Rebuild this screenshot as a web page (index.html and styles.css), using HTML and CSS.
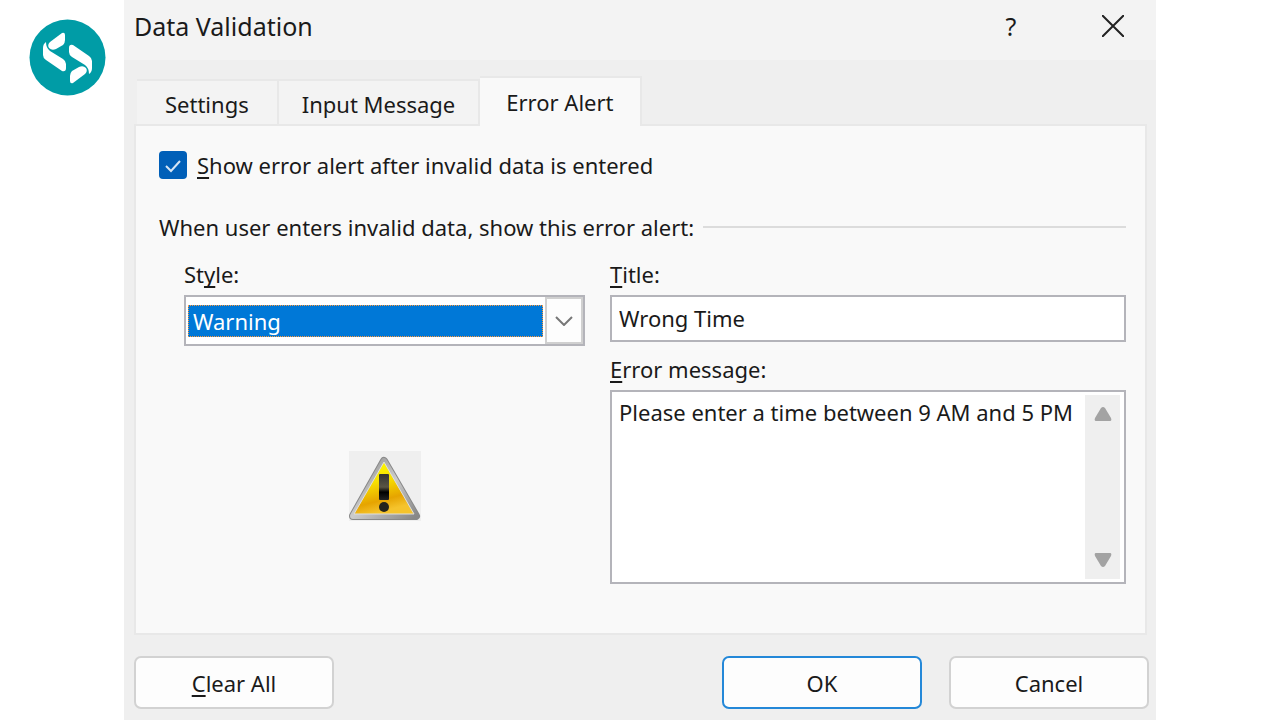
FILE: index.html
```html
<!DOCTYPE html>
<html lang="en">
<head>
    <meta charset="UTF-8">
    <meta name="viewport" content="width=device-width, initial-scale=1.0">
    <title>Data Validation</title>
    <link rel="stylesheet" href="styles.css">
</head>
<body>
    <div class="page">
        <header class="brand">
            <svg class="logo" viewBox="0 0 77 77" role="img" aria-label="Logo">
                <defs>
                    <g id="half">
                        <path d="M33 14 Q36 13 36 16 V21 Q36 24 34 26 L27 30 Q23 32 20 29 Q18 26 21 23 Z"/>
                        <path d="M17 23 Q14 25 14 29 V36 Q14 39 17 41 L33 52 Q37 53 37 49 V45 Q37 42 34 40 L21 32 Q17 29 17 23 Z"/>
                    </g>
                </defs>
                <circle cx="38.5" cy="38.5" r="38" fill="#009ca6"/>
                <use href="#half" fill="#fff"/>
                <use href="#half" fill="#fff" transform="rotate(180 38.5 39)"/>
            </svg>
        </header>

        <main class="dialog">
            <div class="title-bar">
                <h1>Data Validation</h1>
                <button class="title-button" type="button" aria-label="Help">?</button>
                <button class="title-button close-button" type="button" aria-label="Close">
                    <svg width="22" height="22" viewBox="0 0 22 22" fill="none" stroke="#222" stroke-width="2">
                        <path d="M0 0 L22 22 M22 0 L0 22"/>
                    </svg>
                </button>
            </div>

            <form class="dialog-body">
                <div class="tabs" role="tablist">
                    <button class="tab first" type="button" role="tab">Settings</button>
                    <button class="tab" type="button" role="tab">Input Message</button>
                    <button class="tab active" type="button" role="tab" aria-selected="true">Error Alert</button>
                </div>

                <section class="panel">
                    <div class="check-row">
                        <input type="checkbox" id="showAlert" checked>
                        <label for="showAlert"><u>S</u>how error alert after invalid data is entered</label>
                    </div>

                    <h2>When user enters invalid data, show this error alert:</h2>

                    <div class="columns">
                        <div class="column">
                            <label for="alertStyle">St<u>y</u>le:</label>
                            <div class="select-box">
                                <select id="alertStyle">
                                    <option>Stop</option>
                                    <option selected>Warning</option>
                                    <option>Information</option>
                                </select>
                                <span class="select-arrow">
                                    <svg width="18" height="10" viewBox="0 0 18 10" fill="none" stroke="#777" stroke-width="2">
                                        <path d="M1 1 L9 9 L17 1"/>
                                    </svg>
                                </span>
                            </div>
                            <svg class="warning-icon" viewBox="0 0 72 70" role="img" aria-label="Warning">
                                <defs>
                                    <linearGradient id="metal" x1="0" y1="0" x2="1" y2="1">
                                        <stop offset="0" stop-color="#888"/>
                                        <stop offset="0.5" stop-color="#ccc"/>
                                        <stop offset="1" stop-color="#888"/>
                                    </linearGradient>
                                    <linearGradient id="yellow" x1="0" y1="0" x2="0.3" y2="1">
                                        <stop offset="0" stop-color="#ffff00"/>
                                        <stop offset="0.45" stop-color="#f8e000"/>
                                        <stop offset="0.8" stop-color="#e6a400"/>
                                        <stop offset="1" stop-color="#f5c32c"/>
                                    </linearGradient>
                                    <linearGradient id="mark" x1="0" y1="0" x2="0" y2="1">
                                        <stop offset="0" stop-color="#333"/>
                                        <stop offset="0.5" stop-color="#5a5544"/>
                                        <stop offset="0.7" stop-color="#000"/>
                                        <stop offset="1" stop-color="#222"/>
                                    </linearGradient>
                                </defs>
                                <rect width="72" height="70" fill="#efefef"/>
                                <path d="M35 10 L67 65 H4 Z" fill="#999" stroke="#888" stroke-width="8" stroke-linejoin="round"/>
                                <path d="M35 10 L67 65 H4 Z" fill="none" stroke="url(#metal)" stroke-width="6" stroke-linejoin="round"/>
                                <path d="M35 11 L65 63 H5 Z" fill="url(#yellow)" stroke="#dedede" stroke-width="1"/>
                                <rect x="30" y="23" width="10" height="26" rx="1" fill="url(#mark)"/>
                                <circle cx="35" cy="56" r="5" fill="#25251d"/>
                            </svg>
                        </div>

                        <div class="column">
                            <label for="alertTitle"><u>T</u>itle:</label>
                            <input class="text-input" type="text" id="alertTitle" value="Wrong Time">
                            <label for="alertMessage"><u>E</u>rror message:</label>
                            <div class="message-box">
                                <textarea id="alertMessage">Please enter a time between 9 AM and 5 PM</textarea>
                                <div class="scrollbar">
                                    <button type="button" aria-label="Scroll up">
                                        <svg width="18" height="14" viewBox="0 0 18 14" fill="#a3a3a3">
                                            <path d="M7 1 Q9 -1 11 1 L17 11 Q18 14 16 14 H2 Q0 14 1 11 Z"/>
                                        </svg>
                                    </button>
                                    <button type="button" aria-label="Scroll down">
                                        <svg width="18" height="14" viewBox="0 0 18 14" fill="#a3a3a3">
                                            <path d="M7 13 Q9 15 11 13 L17 3 Q18 0 16 0 H2 Q0 0 1 3 Z"/>
                                        </svg>
                                    </button>
                                </div>
                            </div>
                        </div>
                    </div>
                </section>

                <div class="button-group">
                    <button class="button clear-button" type="button"><u>C</u>lear All</button>
                    <button class="button ok-button" type="submit">OK</button>
                    <button class="button" type="button">Cancel</button>
                </div>
            </form>
        </main>
    </div>
</body>
</html>
```
FILE: styles.css
```css
* {
    margin: 0;
    padding: 0;
    box-sizing: border-box;
}

body {
    background-color: #ffffff;
    color: #1a1a1a;
    font-family: "Noto Sans", "Open Sans", sans-serif;
    font-size: 22px;
    line-height: 30px;
}

button,
input,
select,
textarea {
    font: inherit;
    color: inherit;
}

u {
    text-decoration-thickness: 2px;
    text-underline-offset: 3px;
    text-decoration-skip-ink: none;
}

.page {
    display: grid;
    grid-template-columns: 124px 1fr 124px;
    min-height: 100vh;
}

.brand {
    padding: 19px 0 0 29px;
}

.logo {
    display: block;
    width: 77px;
    height: 77px;
}

.dialog {
    background-color: #efefef;
}

.title-bar {
    display: flex;
    align-items: center;
    height: 60px;
    padding: 0 32px 8px 10px;
    background-color: #f3f3f3;
}

.title-bar h1 {
    flex: 1;
    font-size: 25px;
    font-weight: normal;
}

.title-button {
    width: 22px;
    border: none;
    background: none;
    font-size: 25px;
}

.close-button {
    margin-left: 80px;
}

.title-button svg {
    display: block;
}

.dialog-body {
    padding: 16px 7px 10px 10px;
}

.tabs {
    display: flex;
    align-items: flex-end;
    padding-left: 3px;
}

.tab {
    height: 45px;
    padding: 2px 23px 0;
    border: 2px solid #e8e8e8;
    border-width: 2px 2px 0 0;
    background-color: #f3f3f3;
}

.tab.first {
    padding: 2px 28px 0;
}

.tab.active {
    position: relative;
    height: 50px;
    margin-bottom: -2px;
    padding: 0 26px;
    background-color: #f9f9f9;
}

.panel {
    margin-right: 2px;
    padding: 24px 19px 49px 23px;
    border: 2px solid #e8e8e8;
    background-color: #f9f9f9;
}

.check-row {
    display: flex;
    align-items: center;
    gap: 10px;
}

.check-row input {
    appearance: none;
    width: 28px;
    height: 28px;
    border-radius: 4px;
    background-color: #005fb8;
}

.check-row input:checked {
    background-image: url("data:image/svg+xml,%3Csvg xmlns='http://www.w3.org/2000/svg' viewBox='0 0 28 28'%3E%3Cpath d='M7 15l5 5L21 10' fill='none' stroke='%23d5e5f5' stroke-width='2'/%3E%3C/svg%3E");
}

.panel h2 {
    display: flex;
    align-items: center;
    gap: 9px;
    margin-top: 32px;
    font-size: 22px;
    font-weight: normal;
}

.panel h2::after {
    content: "";
    flex: 1;
    height: 2px;
    background-color: #dcdcdc;
}

.columns {
    display: grid;
    grid-template-columns: 401fr 516fr;
    gap: 25px;
    margin-top: 17px;
    padding-left: 25px;
}

.column {
    display: flex;
    flex-direction: column;
    gap: 6px;
    min-width: 0;
}

.select-box {
    display: flex;
    align-items: center;
    height: 51px;
    padding-left: 2px;
    border: 2px solid #b4b4ba;
    background-color: #ffffff;
}

.select-box select {
    appearance: none;
    flex: 1;
    min-width: 0;
    height: 32px;
    padding-left: 4px;
    border: 1px dotted #ff9a3c;
    border-radius: 0;
    background-color: #0078d7;
    color: #ffffff;
}

.select-arrow {
    display: flex;
    align-items: center;
    justify-content: center;
    align-self: stretch;
    width: 38px;
    margin-left: 2px;
    border: 2px solid #d0d0d0;
    background-color: #fdfdfd;
}

.warning-icon {
    width: 72px;
    height: 70px;
    margin: 99px auto 0;
}

.text-input {
    width: 100%;
    height: 47px;
    margin-bottom: 6px;
    padding: 0 7px 2px;
    border: 2px solid #b4b4ba;
    background-color: #ffffff;
}

.message-box {
    display: flex;
    height: 194px;
    padding: 3px 4px 3px 0;
    border: 2px solid #b4b4ba;
    background-color: #ffffff;
}

.message-box textarea {
    flex: 1;
    min-width: 0;
    padding: 2px 0 0 7px;
    border: none;
    resize: none;
    overflow: hidden;
}

.scrollbar {
    display: flex;
    flex-direction: column;
    justify-content: space-between;
    width: 35px;
    padding: 12px 0;
    background-color: #efefef;
}

.scrollbar button {
    border: none;
    background: none;
}

.scrollbar svg {
    display: block;
    margin: 0 auto;
}

.button-group {
    display: flex;
    gap: 27px;
    margin-top: 21px;
}

.button {
    width: 200px;
    height: 53px;
    border: 2px solid #d2d2d2;
    border-radius: 7px;
    background-color: #fdfdfd;
}

.clear-button {
    margin-right: auto;
}

.ok-button {
    border-color: #2488d8;
}
```
